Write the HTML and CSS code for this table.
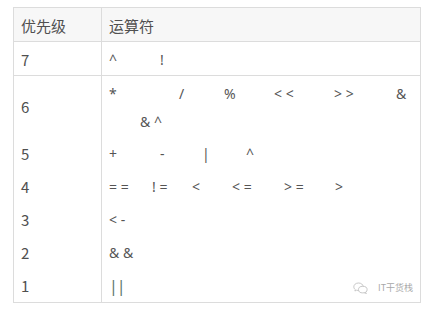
FILE: index.html
```html
<!DOCTYPE html>
<html lang="zh">
<head>
<meta charset="utf-8">
<link rel="stylesheet" href="styles.css">
</head>
<body>
<div class="wrap">
  <table class="tbl">
    <tr class="head">
      <th class="c1">优先级</th>
      <th class="c2">运算符</th>
    </tr>
    <tr class="row line">
      <td class="c1">7</td>
      <td class="c2"><span class="op w51">^</span><span class="op">!</span></td>
    </tr>
    <tr class="row r6">
      <td class="c1">6</td>
      <td class="c2">
        <div class="ln"><span class="op w70">*</span><span class="op w45">/</span><span class="op w50">%</span><span class="op w60">&lt; &lt;</span><span class="op w62">&gt; &gt;</span><span class="op">&amp;</span></div>
        <div class="ln ind"><span class="op">&amp; ^</span></div>
      </td>
    </tr>
    <tr class="row">
      <td class="c1">5</td>
      <td class="c2"><span class="op w51">+</span><span class="op w42">-</span><span class="op w44">|</span><span class="op">^</span></td>
    </tr>
    <tr class="row">
      <td class="c1">4</td>
      <td class="c2"><span class="op w43">= =</span><span class="op w40">! =</span><span class="op w40">&lt;</span><span class="op w52">&lt; =</span><span class="op w51">&gt; =</span><span class="op">&gt;</span></td>
    </tr>
    <tr class="row">
      <td class="c1">3</td>
      <td class="c2"><span class="op">&lt; -</span></td>
    </tr>
    <tr class="row">
      <td class="c1">2</td>
      <td class="c2"><span class="op">&amp; &amp;</span></td>
    </tr>
    <tr class="row last">
      <td class="c1">1</td>
      <td class="c2"><span class="op pipes">||</span></td>
    </tr>
  </table>
  <div class="mark">
    <svg class="wx" width="15" height="12" viewBox="0 0 15 12">
      <path d="M5.5 1 C2.7 1 0.8 2.8 0.8 4.8 C0.8 6 1.4 6.9 2.3 7.6 L1.9 9 L3.6 8.2 C4.2 8.4 4.8 8.5 5.5 8.5" fill="none" stroke="#c2c2c2" stroke-width="0.9"/>
      <path d="M5.5 1 C8.2 1 10 2.6 10.2 4.4" fill="none" stroke="#c2c2c2" stroke-width="0.9"/>
      <ellipse cx="9.8" cy="7.6" rx="4.3" ry="3.3" fill="none" stroke="#c2c2c2" stroke-width="0.9"/>
      <path d="M12.6 10.3 L13.4 11.5 L11.4 10.8" fill="none" stroke="#c2c2c2" stroke-width="0.9"/>
    </svg>
    <span class="mtext">IT干货栈</span>
  </div>
</div>
</body>
</html>
```
FILE: styles.css
```css
html, body {
  margin: 0;
  padding: 0;
  background: #ffffff;
}
.wrap {
  position: relative;
  padding: 7px 0 0 13px;
  font-family: "Noto Sans CJK SC", "Noto Sans", sans-serif;
  color: #505050;
}
.tbl {
  border-collapse: collapse;
  width: 408px;
  border: 1px solid #dcdcdc;
}
.tbl th, .tbl td {
  padding: 0 7px;
  text-align: left;
  vertical-align: middle;
  font-weight: normal;
}
.c1 {
  width: 73px;
  border-right: 1px solid #dcdcdc;
}
.head th {
  height: 31px;
  background: #f7f7f7;
  border-bottom: 1px solid #dcdcdc;
  font-size: 15px;
  line-height: 20px;
  padding-top: 2px;
}
.row td {
  height: 31px;
  font-size: 15px;
  line-height: 20px;
  padding-top: 2px;
}
.row.line td {
  border-bottom: 1px solid #dcdcdc;
}
.row.r6 td {
  height: 58px;
}
.row.last td {
  height: 32px;
}
.c2 .op {
  display: inline-block;
  font-family: "Noto Sans", "Open Sans", sans-serif;
  font-size: 14px;
  color: #555;
  white-space: pre;
}
.ln {
  line-height: 27px;
}
.ind {
  padding-left: 31px;
}
.w40 { width: 40px; }
.w42 { width: 42px; }
.w43 { width: 43px; }
.w44 { width: 44px; }
.w45 { width: 45px; }
.w50 { width: 50px; }
.w51 { width: 51px; }
.w52 { width: 52px; }
.w60 { width: 60px; }
.w62 { width: 62px; }
.w70 { width: 70px; }
.c2 .pipes {
  color: #5d7568;
  font-size: 16px;
  letter-spacing: -1px;
}
.mark {
  position: absolute;
  left: 353px;
  top: 282px;
  display: flex;
  align-items: center;
  gap: 10px;
}
.mtext {
  font-size: 9px;
  color: #a8a8a8;
  line-height: 12px;
}
```
